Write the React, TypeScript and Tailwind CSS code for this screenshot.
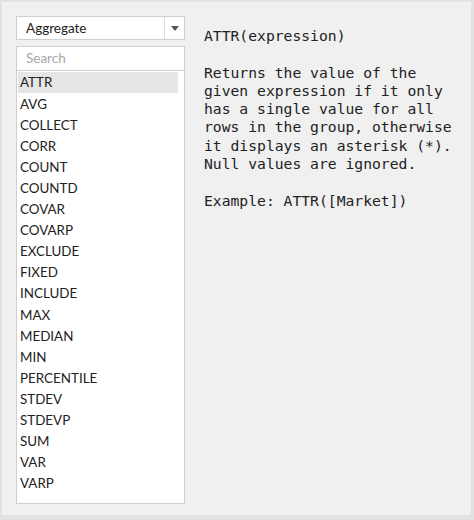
const FUNCTIONS = [
  "ATTR",
  "AVG",
  "COLLECT",
  "CORR",
  "COUNT",
  "COUNTD",
  "COVAR",
  "COVARP",
  "EXCLUDE",
  "FIXED",
  "INCLUDE",
  "MAX",
  "MEDIAN",
  "MIN",
  "PERCENTILE",
  "STDEV",
  "STDEVP",
  "SUM",
  "VAR",
  "VARP",
];

const HELP = `ATTR(expression)

Returns the value of the
given expression if it only
has a single value for all
rows in the group, otherwise
it displays an asterisk (*).
Null values are ignored.

Example: ATTR([Market])`;

const App = () => {
  return (
    <div className="w-[474px] h-[520px] bg-[#e2e2e2] pt-[2px] pl-[2px] pr-[3px] pb-[5px]">
      <div className="h-full bg-[#f0f0f0] border-t border-l border-[#f7f7f7] flex pt-[13px] pl-[13px]">
        {/* left column: category picker, search and function list */}
        <div className="w-[169px] flex flex-col font-['Lato',sans-serif] text-[13.4px] text-[#222]">
          <div className="h-[24px] bg-white border border-[#cfcfcf] flex items-center">
            <span className="flex-1 pl-[9px] text-[13.5px]">Aggregate</span>
            <div className="w-[20px] h-full border-l border-[#dcdcdc] flex items-center justify-center">
              <svg width="8" height="5" viewBox="0 0 8 5">
                <path d="M0 0h8L4 5z" fill="#555" />
              </svg>
            </div>
          </div>
          <div className="mt-[6px] h-[25px] bg-white border border-[#cfcfcf] flex items-center pl-[9px] text-[#a8a8a8] text-[13.5px]">
            Search
          </div>
          <div className="h-[433px] bg-white border border-t-0 border-[#cfcfcf] pl-px pr-[6px] pt-px">
            {FUNCTIONS.map((name, i) => (
              <div
                key={name}
                className={`h-[21.1px] flex items-center pl-[2px] ${i === 0 ? "bg-[#e6e6e6]" : ""}`}
              >
                {name}
              </div>
            ))}
          </div>
        </div>
        {/* right column: help text for the selected function */}
        <pre className="ml-[19px] mt-[11px] font-['DejaVu_Sans_Mono',monospace] text-[14.7px] leading-[18.3px] text-[#222]">
          {HELP}
        </pre>
      </div>
    </div>
  );
};

export default App;
